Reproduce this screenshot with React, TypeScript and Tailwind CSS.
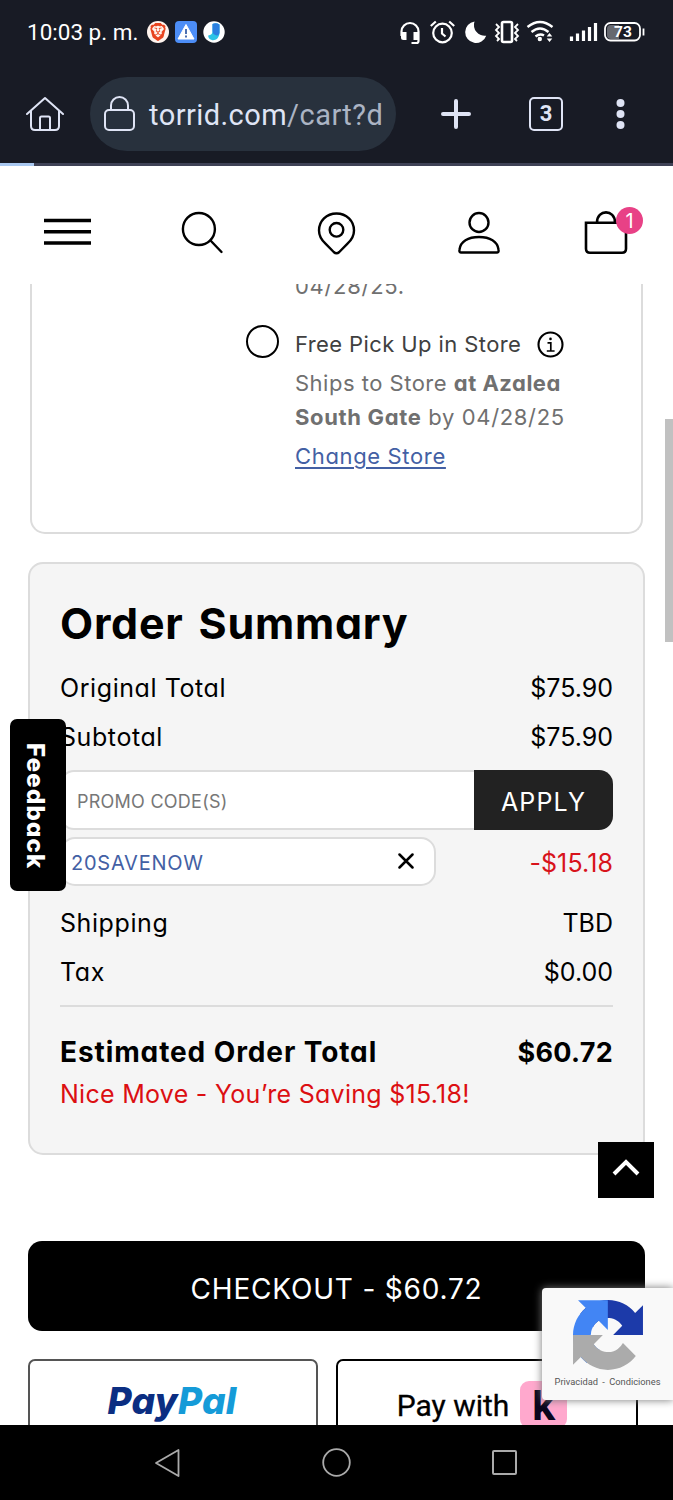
import type { ReactNode } from "react";
import { SiBrave } from "react-icons/si";

type RowProps = {
  label: string;
  value: string;
};

function StatusBar() {
  return (
    <div className="flex h-[63px] items-center pl-[27px] pr-[28px] text-white">
      <span className="w-[120px] whitespace-nowrap pt-[1px] font-['Roboto'] text-[22.500px] leading-none">
        10:03 p. m.
      </span>
      <span className="flex size-[22px] items-center justify-center rounded-full bg-[#fff4ee] text-[#e8441f]">
        <SiBrave size={18} />
      </span>
      <svg className="ml-[6px]" width="22" height="22" viewBox="0 0 22 22">
        <rect width="22" height="22" rx="4" fill="#4c8df6" />
        <path d="M11 3.5 19 18H3Z" fill="#fff" stroke="#fff" strokeLinejoin="round" />
        <path d="M11 8v5M11 14.6v2" stroke="#4c6fb0" strokeWidth="2" />
      </svg>
      <svg className="ml-[6px]" width="22" height="22" viewBox="0 0 22 22">
        <circle cx="11" cy="11" r="10.7" fill="#fff" />
        <path d="M9.500 3q3.500-1.500 7 .5V12c-.3 5-3.500 7.500-7 7.200-3-.3-4.500-2.700-4.300-4.700 2.800-.5 4.300-1.500 4.300-4.500Z" fill="#2cc3e6" />
        <path d="M9.500 3q3.500-1.500 7 .5V12q-1 3-3 2.500-4-1-4-4.500Z" fill="#2b7fe0" />
      </svg>

      <svg className="ml-auto" width="246" height="26" viewBox="399 18 246 26" fill="none" stroke="#fff" strokeWidth="2.2">
        <path d="M401.500 35v-4.500a8.500 8.500 0 0 1 17 0V40q0 2-2 2h-5" />
        <path d="M401 31h5.500v8h-3q-2.500 0-2.500-2.500ZM419 31h-5.500v8h5.500Z" fill="#fff" stroke="none" />
        <circle cx="442.500" cy="32" r="9.300" />
        <path d="M442 27v5.500l3.500 3M430.800 25l5-4.500M454.200 25l-5-4.500" />
        <path d="M474.500 20.500a10.800 10.800 0 1 0 11.700 14.200A10.800 10.800 0 0 1 474.500 20.500Z" fill="#fff" stroke="none" />
        <rect x="502" y="21" width="10" height="20" rx="1.500" strokeWidth="2.600" />
        <path d="m496 23 3 3-3 3 3 3-3 3 3 3-2 2M518 23l-3 3 3 3-3 3 3 3-3 3 2 2" strokeWidth="1.800" />
        <path d="M527.500 26q12.500-10 25 0M531.500 31q8.500-7 17 0M535.500 35.500q4.500-3.500 8.500-1" strokeWidth="2.400" />
        <circle cx="539.800" cy="38" r="2.200" fill="#fff" stroke="none" />
        <path d="m549.500 32 2.800 3.500h-5.600ZM549.500 41l2.800-3.500h-5.600Z" fill="#fff" stroke="none" />
        <path d="M571.500 40v-4.500M577.500 40v-7.500M583.500 40V29.500M589.500 40V26M595.500 40V22" strokeWidth="3.200" />
        <path d="M611 24h8v14h-8q-4 0-4-4v-6q0-4 4-4Z" fill="#66686f" stroke="none" />
        <rect x="605" y="22" width="35" height="17.500" rx="5.500" strokeWidth="1.800" />
        <path d="M643.500 27.500v7" strokeWidth="1.800" />
        <text x="623" y="36" textAnchor="middle" fill="#fff" stroke="none" className="font-['Roboto'] text-[15.500px] font-bold">
          73
        </text>
      </svg>
    </div>
  );
}

function BrowserBar() {
  return (
    <div className="flex h-[100px] items-start pl-[26px] pt-[14px] text-[#dfe4f5]">
      <svg className="mt-[19px]" width="38" height="36" viewBox="0 0 38 36" fill="none" stroke="currentColor" strokeWidth="2">
        <path d="M1 18 19 2l18 16M5 15v15q0 4 4 4h20q4 0 4-4V15M14 34V22q0-1.500 1.500-1.500h7q1.500 0 1.500 1.500v12" strokeLinecap="round" strokeLinejoin="round" />
      </svg>
      <div className="ml-[26px] flex h-[74px] w-[306px] items-center rounded-full bg-[#28313d] pl-[14px]">
        <svg width="31" height="36" viewBox="0 0 31 36" fill="none" stroke="currentColor" strokeWidth="2">
          <rect x="1" y="14" width="29" height="20" rx="4" />
          <path d="M7 14V9.500a8.500 8.500 0 0 1 17 0V14" />
        </svg>
        <span className="ml-[14px] whitespace-nowrap pt-[2px] font-['Roboto'] text-[29px] leading-none tracking-[0.45px]">
          torrid.com<span className="text-[#abb4c4]">/cart?d</span>
        </span>
      </div>
      <svg className="ml-[44px] mt-[21px]" width="32" height="32" viewBox="0 0 32 32" stroke="currentColor" strokeWidth="4" strokeLinecap="round">
        <path d="M16 3v26M3 16h26" />
      </svg>
      <div className="ml-[57px] mt-[20px] flex h-[34px] w-[34px] items-center justify-center rounded-[5px] border-2 border-current font-['Roboto'] text-[22px] font-bold leading-none">
        3
      </div>
      <svg className="ml-[52px] mt-[21px]" width="11" height="32" viewBox="0 0 11 32" fill="currentColor">
        <circle cx="5.500" cy="5" r="4" />
        <circle cx="5.500" cy="16" r="4" />
        <circle cx="5.500" cy="27" r="4" />
      </svg>
    </div>
  );
}

function SiteHeader() {
  return (
    <header className="flex h-[118px] items-start bg-white pl-[44px] pt-[36px]">
      <svg width="47" height="60" viewBox="0 0 47 60" stroke="#000" strokeWidth="3.500">
        <path d="M0 18.500h47M0 29.800h47M0 41h47" />
      </svg>
      <svg className="ml-[89px]" width="44" height="60" viewBox="0 0 44 60" fill="none" stroke="#000" strokeWidth="2.400" strokeLinecap="round">
        <circle cx="18.900" cy="27" r="16" />
        <path d="m30.500 38.500 11 11.500" />
      </svg>
      <svg className="ml-[92px]" width="41" height="60" viewBox="0 0 41 60" fill="none" stroke="#000" strokeWidth="2.400">
        <path d="M20.500 11.500c10 0 17.500 7.500 17.500 17 0 5-2.500 9.500-6.500 13.200L23.300 50q-2.800 2.600-5.600 0L9.500 41.700C5.500 38 3 33.500 3 28.500c0-9.500 7.500-17 17.500-17Z" />
        <circle cx="20.500" cy="27.800" r="6.800" />
      </svg>
      <svg className="ml-[101px]" width="42" height="60" viewBox="0 0 42 60" fill="none" stroke="#000" strokeWidth="2.400">
        <circle cx="21" cy="20.500" r="9.500" />
        <path d="M2.800 50.500q-1.800 0-1.300-3C2.500 39.500 10 35 21 35s18.500 4.500 19.500 12.500q.5 3-1.300 3Z" />
      </svg>
      <div className="relative ml-[83px]">
        <svg width="46" height="60" viewBox="0 0 46 60" fill="none" stroke="#000" strokeWidth="2.600">
          <path d="M3 20.800h40v26q0 4-4 4H7q-4 0-4-4ZM14 20.500c0-13.500 18-13.500 18 0" />
        </svg>
        <span className="absolute left-[33px] top-[5px] flex size-[27px] items-center justify-center rounded-full bg-[#e84186] text-[20px] leading-none text-white">
          1
        </span>
      </div>
    </header>
  );
}

function DeliveryCard() {
  return (
    <section className="ml-[30px] h-[250px] w-[613px] rounded-b-[15px] border-2 border-t-0 border-[#dcdcdc] pl-[214px] text-[22px] text-[#707070]">
      <div className="flex h-[34px] pl-[49px]">
        <p className="-mt-[11px] leading-[26px] tracking-[0.7px]">04/28/25.</p>
      </div>
      <div className="flex h-[49px]">
        <span className="mt-[7px] size-[33px] rounded-full border-2 border-black" />
        <span className="ml-[16px] w-[242px] whitespace-nowrap leading-[52px] tracking-[0.4px] text-[#404040]">
          Free Pick Up in Store
        </span>
        <svg className="mt-[13px]" width="27" height="27" viewBox="0 0 27 27" fill="none" stroke="#000" strokeWidth="2.100">
          <circle cx="13.500" cy="13.500" r="12" />
          <path d="M10.500 11.800h3.300v8M9.800 20h7.800" strokeWidth="1.700" />
          <circle cx="13.500" cy="7.900" r="1.300" fill="#000" stroke="none" />
        </svg>
      </div>
      <div className="whitespace-nowrap pl-[49px]">
        <p className="leading-[33px] tracking-[0.5px]">
          Ships to Store <b>at Azalea</b>
        </p>
        <p className="leading-[34px] tracking-[0.65px]">
          <b>South Gate</b> by 04/28/25
        </p>
        <a className="mt-[6px] inline-block leading-[33px] tracking-[0.65px] text-[#4360a4] underline decoration-2 underline-offset-[3px]">
          Change Store
        </a>
      </div>
    </section>
  );
}

function Row({ label, value }: RowProps) {
  return (
    <div className="flex h-[49px] items-center justify-between whitespace-nowrap text-[25px] leading-none">
      <span className="tracking-[0.58px]">{label}</span>
      <span>{value}</span>
    </div>
  );
}

function OrderSummary() {
  return (
    <section className="ml-[28px] mt-[28px] h-[593px] w-[617px] rounded-[15px] border-2 border-[#dcdcdc] bg-[#f5f5f5] px-[30px] pt-[33px]">
      <h1 className="h-[67px] whitespace-nowrap text-[43px] font-bold leading-[53px] tracking-[0.75px] [word-spacing:4px]">
        Order Summary
      </h1>
      <Row label="Original Total" value="$75.90" />
      <Row label="Subtotal" value="$75.90" />
      <div className="mt-[8px] flex h-[60px]">
        <div className="flex flex-1 items-center rounded-l-[14px] border-2 border-r-0 border-[#dcdcdc] bg-white pl-[15px] pt-[2px] text-[18px] tracking-[0.25px] text-[#777]">
          PROMO CODE(S)
        </div>
        <button className="w-[139px] rounded-r-[14px] bg-[#222] pt-[5px] text-[25px] tracking-[1.1px] text-white">APPLY</button>
      </div>
      <div className="mt-[7px] flex h-[49px] items-center justify-between">
        <div className="flex h-full w-[376px] items-center justify-between rounded-[15px] border-2 border-[#dcdcdc] bg-white pl-[9px] pr-[20px]">
          <span className="pt-[3px] text-[20px] tracking-[0.75px] text-[#4360a4]">20SAVENOW</span>
          <svg className="-mt-[2px]" width="16" height="16" viewBox="0 0 16 16" stroke="#000" strokeWidth="2.500" strokeLinecap="round">
            <path d="m1.500 1.500 13 13m0-13-13 13" />
          </svg>
        </div>
        <span className="pt-[4px] text-[25px] tracking-[0.1px] text-[#d8131b]">-$15.18</span>
      </div>
      <div className="mt-[13px]">
        <Row label="Shipping" value="TBD" />
        <Row label="Tax" value="$0.00" />
      </div>
      <hr className="mt-[8px] border-t-2 border-[#dcdcdc]" />
      <div className="mt-[24px] flex h-[42px] items-center justify-between whitespace-nowrap text-[27px] font-bold leading-none">
        <span className="text-[28px] tracking-[0.9px]">Estimated Order Total</span>
        <span className="tracking-[0.3px]">$60.72</span>
      </div>
      <p className="h-[42px] whitespace-nowrap text-[25px] leading-[42px] tracking-[0.28px] text-[#dc0f12]">
        Nice Move - You’re Saving $15.18!
      </p>
    </section>
  );
}

function PayButton({ children, className }: { children: ReactNode; className: string }) {
  return <div className={`flex h-[88px] items-center justify-center rounded-[7px] border-2 bg-white ${className}`}>{children}</div>;
}

function Payments() {
  return (
    <>
      <button className="ml-[28px] mt-[86px] block h-[90px] w-[617px] rounded-[14px] bg-black pt-[5px] text-[28px] tracking-[0.8px] text-white">
        CHECKOUT - $60.72
      </button>
      <div className="mt-[28px] flex gap-[18px] pl-[28px]">
        <PayButton className="w-[290px] border-[#555] pb-[5px] pr-[2px]">
          <span className="text-[37px] font-extrabold italic leading-none tracking-[0.3px] text-[#0b2e82]">
            Pay<span className="text-[#159bd8]">Pal</span>
          </span>
        </PayButton>
        <PayButton className="w-[302px] border-black pr-[10px] pt-[3px]">
          <span className="pt-[2px] font-['Roboto'] text-[30px] leading-none [-webkit-text-stroke:0.3px_black]">Pay with</span>
          <span className="ml-[11px] flex h-[47px] w-[47px] items-center justify-center rounded-[9px] bg-[#ffa8cd] pt-[2px] text-[41px] font-bold leading-none text-[#0b051d]">
            k
          </span>
        </PayButton>
      </div>
    </>
  );
}

function RecaptchaBadge() {
  return (
    <div className="absolute left-[542px] top-[1004px] flex h-[112px] w-[131px] flex-col items-center rounded-l-[4px] bg-[#f9f9f9] pt-[12px] shadow-[0_0_8px_#777]">
      <svg width="70" height="70" viewBox="0 0 64 64">
        <path d="M64 31.955l-.033-1.370V4.687l-7.160 7.160C50.948 4.674 42.033.093 32.050.093c-10.400 0-19.622 4.960-25.458 12.640l11.736 11.860a15.550 15.550 0 0 1 4.754-5.334c2.050-1.600 4.952-2.906 8.968-2.906.485 0 .860.057 1.135.163 4.976.393 9.288 3.140 11.828 7.124l-8.307 8.307L64 31.953" fill="#1c3aa9" />
        <path d="M31.862.094l-1.370.033H4.594l7.160 7.160C4.580 13.147 0 22.060 0 32.046c0 10.400 4.960 19.622 12.640 25.458L24.500 45.768a15.550 15.550 0 0 1-5.334-4.754c-1.600-2.050-2.906-4.952-2.906-8.968 0-.485.057-.860.163-1.135.393-4.976 3.140-9.288 7.124-11.828l8.307 8.307L31.860.095" fill="#4285f4" />
        <path d="M.001 32.045l.033 1.370v25.898l7.160-7.160c5.860 7.173 14.774 11.754 24.760 11.754 10.400 0 19.622-4.960 25.458-12.640l-11.736-11.860a15.550 15.550 0 0 1-4.754 5.334c-2.050 1.600-4.952 2.906-8.968 2.906-.485 0-.860-.057-1.135-.163-4.976-.393-9.288-3.140-11.828-7.124l8.307-8.307c-10.522.040-22.400.066-27.295-.005" fill="#ababab" />
      </svg>
      <span className="mt-[7px] whitespace-nowrap font-['Roboto'] text-[9.300px] leading-none text-[#555] [word-spacing:2px]">
        Privacidad - Condiciones
      </span>
    </div>
  );
}

function SystemNav() {
  return (
    <nav className="flex h-[75px] items-center bg-black pl-[154px]">
      <svg width="27" height="30" viewBox="0 0 27 30" fill="none" stroke="#aaa" strokeWidth="1.800" strokeLinejoin="round">
        <path d="M24.500 2v26L2 15Z" />
      </svg>
      <svg className="ml-[141px]" width="29" height="29" viewBox="0 0 29 29" fill="none" stroke="#aaa" strokeWidth="1.800">
        <circle cx="14.500" cy="14.500" r="13.300" />
      </svg>
      <span className="ml-[141px] size-[25px] rounded-[2px] border-2 border-[#aaa]" />
    </nav>
  );
}

export default function App() {
  return (
    <div className="h-[1500px] w-[673px] overflow-hidden bg-white font-['Inter',sans-serif] text-black [font-feature-settings:'cv11']">
      <div className="bg-[#181b25]">
        <StatusBar />
        <BrowserBar />
        <div className="h-[3px] bg-[#3f4256]">
          <div className="h-full w-[34px] bg-[#a9c8f0]" />
        </div>
      </div>
      <SiteHeader />
      <main className="relative h-[1141px] overflow-hidden">
        <DeliveryCard />
        <OrderSummary />
        <Payments />
        <div className="absolute left-[10px] top-[435px] flex h-[172px] w-[56px] items-center justify-center rounded-[7px] bg-black pr-[6px] pt-[2px] text-white">
          <span className="text-[24px] font-extrabold leading-none tracking-[1.2px] [writing-mode:vertical-rl]">Feedback</span>
        </div>
        <div className="absolute left-[598px] top-[858px] flex size-[56px] items-center justify-center bg-black pb-[6px]">
          <svg width="28" height="18" viewBox="0 0 28 18" fill="none" stroke="#fff" strokeWidth="4">
            <path d="M2 16 14 4l12 12" />
          </svg>
        </div>
        <div className="absolute right-0 top-[135px] h-[223px] w-[8px] bg-[#c1c1c1]" />
        <RecaptchaBadge />
      </main>
      <SystemNav />
    </div>
  );
}
